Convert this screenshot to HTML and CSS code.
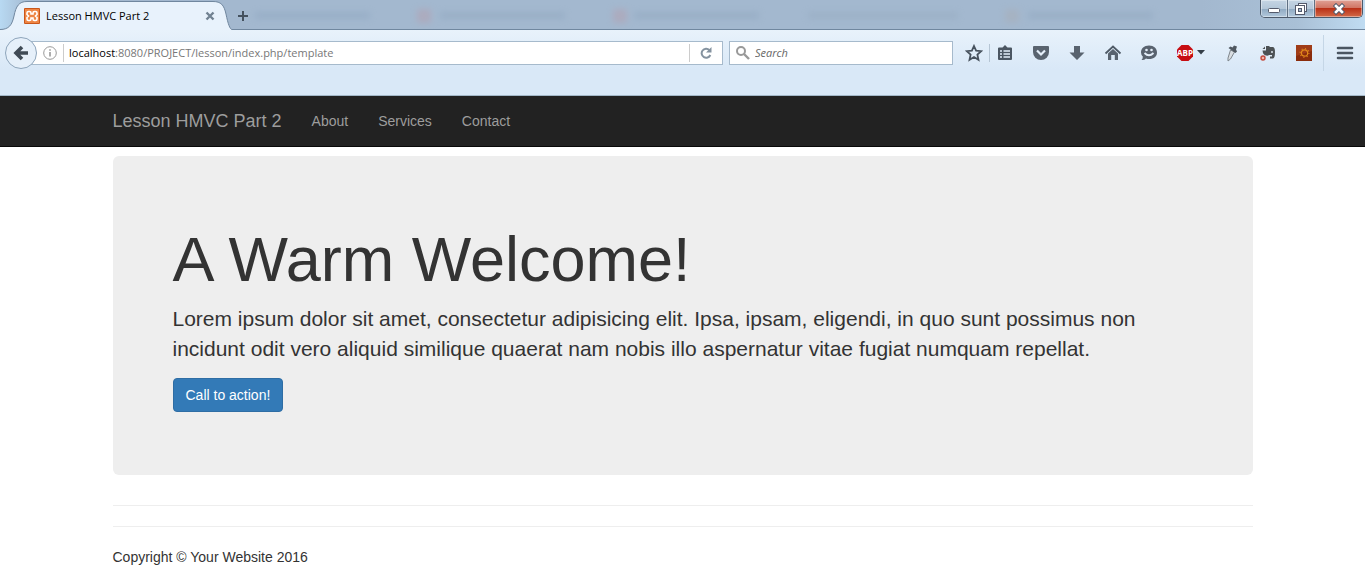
FILE: index.html
```
<!DOCTYPE html>
<html lang="en">
<head>
    <meta charset="UTF-8">
    <meta name="viewport" content="width=device-width, initial-scale=1.0">
    <title>Lesson HMVC Part 2</title>
    <link rel="stylesheet" href="styles.css">
</head>
<body>
    <!-- Browser window -->
    <header class="browser">
        <div class="tab-bar">
            <!-- Blurred background tabs behind the glass -->
            <svg class="glass" aria-hidden="true">
                <defs>
                    <filter id="soft" x="-20%" y="-100%" width="140%" height="300%"><feGaussianBlur stdDeviation="3"/></filter>
                </defs>
                <g filter="url(#soft)">
                    <rect x="255" y="12" width="115" height="7" fill="#8ea6c0"/>
                    <rect x="417" y="9" width="14" height="14" fill="#b59fae"/>
                    <rect x="440" y="12" width="125" height="7" fill="#8fa6be"/>
                    <rect x="613" y="9" width="14" height="14" fill="#b59fae"/>
                    <rect x="634" y="12" width="125" height="7" fill="#8fa6be"/>
                    <rect x="808" y="12" width="150" height="7" fill="#95aac0"/>
                    <rect x="1005" y="9" width="14" height="14" fill="#a9adb6"/>
                    <rect x="1028" y="12" width="125" height="7" fill="#8fa6be"/>
                </g>
            </svg>
            <div class="tab">
                <svg class="tab-shape" viewBox="0 0 232 30" aria-hidden="true">
                    <path d="M0 29.500C9 29.500 12 25 14 16C16 6 19 1.500 27 1.500H213C221 1.500 224 5 226 14C228 24 230 29.500 232 29.500V30H0Z" fill="#e8f2fc"/>
                    <path d="M0 29.500C9 29.500 12 25 14 16C16 6 19 1.500 27 1.500H213C221 1.500 224 5 226 14C228 24 230 29.500 232 29.500" fill="none" stroke="#70879f"/>
                </svg>
                <svg class="favicon" viewBox="0 0 16 16" aria-hidden="true">
                    <rect width="16" height="16" rx="1" fill="#c9561a"/>
                    <rect x="1" y="1" width="14" height="14" fill="#ee8544"/>
                    <path d="M5.500 3.500H4.500Q3 3.500 3 5V6.500L4.500 8L3 9.500V11Q3 12.500 4.500 12.500H5.500Q7 12.500 7 11V10H9V11Q9 12.500 10.500 12.500H11.500Q13 12.500 13 11V9.500L11.500 8L13 6.500V5Q13 3.500 11.500 3.500H10.500Q9 3.500 9 5V6H7V5Q7 3.500 5.500 3.500Z" fill="none" stroke="#fff" stroke-width="1.600"/>
                </svg>
                <span class="tab-title">Lesson HMVC Part 2</span>
                <button class="icon-btn" type="button" aria-label="Close tab">
                    <svg width="10" height="10" viewBox="0 0 10 10"><path d="M1.500 1.500L8.500 8.500M8.500 1.500L1.500 8.500" stroke="#718292" stroke-width="2.400"/></svg>
                </button>
            </div>
            <button class="icon-btn new-tab" type="button" aria-label="New tab">
                <svg width="12" height="12" viewBox="0 0 12 12"><path d="M6 1V11M1 6H11" stroke="#45525f" stroke-width="2"/></svg>
            </button>
            <div class="window-buttons">
                <button class="win-btn" type="button" aria-label="Minimize">
                    <svg width="14" height="14" viewBox="0 0 14 14"><rect x="1.500" y="6.500" width="11" height="4" rx="1" fill="#fff" stroke="#545a6b"/></svg>
                </button>
                <button class="win-btn" type="button" aria-label="Restore">
                    <svg width="14" height="14" viewBox="0 0 14 14"><rect x="4.500" y="1.500" width="8" height="8" fill="#fff" stroke="#545a6b"/><rect x="1.500" y="3.500" width="9" height="9" fill="#fff" stroke="#545a6b"/><rect x="4.500" y="6.500" width="3" height="3" fill="#a9bed2" stroke="#545a6b"/></svg>
                </button>
                <button class="win-btn win-close" type="button" aria-label="Close">
                    <svg width="14" height="14" viewBox="0 0 14 14"><path d="M4 4L10 10M10 4L4 10" stroke="#545a6b" stroke-width="4.500" stroke-linecap="square"/><path d="M4 4L10 10M10 4L4 10" stroke="#fff" stroke-width="2.600" stroke-linecap="square"/></svg>
                </button>
            </div>
        </div>

        <div class="toolbar">
            <button class="back" type="button" aria-label="Back">
                <svg width="16" height="16" viewBox="0 0 16 16"><path d="M9 2L3 8L9 14M3 8H15" fill="none" stroke="#404b56" stroke-width="3.600"/></svg>
            </button>
            <div class="url-bar">
                <svg width="14" height="14" viewBox="0 0 14 14" aria-hidden="true"><circle cx="7" cy="7" r="6.300" fill="none" stroke="#999"/><path d="M7 6V10.500M7 3.200V4.800" stroke="#999" stroke-width="1.600"/></svg>
                <div class="url"><span class="host">localhost</span>:8080/PROJECT/lesson/index.php/template</div>
                <button class="icon-btn reload" type="button" aria-label="Reload">
                    <svg width="12" height="12" viewBox="0 0 12 12"><path d="M9.300 3A4.500 4.500 0 1 0 10.300 8" fill="none" stroke="#84929f" stroke-width="2"/><path d="M11.500 0V5.500H6Z" fill="#84929f"/></svg>
                </button>
            </div>
            <label class="search-box">
                <svg width="14" height="14" viewBox="0 0 14 14" aria-hidden="true"><circle cx="5" cy="5" r="4" fill="none" stroke="#999" stroke-width="2"/><path d="M8 8L13 13" stroke="#999" stroke-width="2.400"/></svg>
                <input type="text" placeholder="Search" aria-label="Search">
            </label>
            <div class="tools">
                <button class="icon-btn star" type="button" aria-label="Bookmark this page">
                    <svg width="18" height="18" viewBox="0 0 18 18"><path d="M9 2L11.100 6.700L16.200 7.200L12.400 10.600L13.500 15.800L9 13.100L4.500 15.800L5.600 10.600L1.800 7.200L6.900 6.700Z" fill="none" stroke="#47525e" stroke-width="1.800"/></svg>
                </button>
                <button class="icon-btn" type="button" aria-label="Bookmarks">
                    <svg width="18" height="18" viewBox="0 0 18 18"><path d="M3 3.500H6.500L9 1L11.500 3.500H15Q16 3.500 16 4.500V15Q16 16 15 16H3Q2 16 2 15V4.500Q2 3.500 3 3.500Z" fill="#4b5662"/><path d="M4 7H6M7.500 7H14M4 10H6M7.500 10H14M4 13H6M7.500 13H14" stroke="#e5effa" stroke-width="1.600"/></svg>
                </button>
                <button class="icon-btn" type="button" aria-label="Pocket">
                    <svg width="18" height="18" viewBox="0 0 18 18"><path d="M2 2H16Q17 2 17 3V8A8 8 0 0 1 1 8V3Q1 2 2 2Z" fill="#59636f"/><path d="M5 6.500L9 10.500L13 6.500" fill="none" stroke="#e5effa" stroke-width="2.200"/></svg>
                </button>
                <button class="icon-btn" type="button" aria-label="Downloads">
                    <svg width="18" height="18" viewBox="0 0 18 18"><path d="M6 2H12V8.500H16.500L9 16L1.500 8.500H6Z" fill="#59636f"/></svg>
                </button>
                <button class="icon-btn" type="button" aria-label="Home">
                    <svg width="18" height="18" viewBox="0 0 18 18"><path d="M1.500 9.500L9 2.500L16.500 9.500" fill="none" stroke="#4f5a66" stroke-width="1.800"/><path d="M4 9.500L9 5L14 9.500V16H10.800V11H7.200V16H4Z" fill="#59636f"/></svg>
                </button>
                <button class="icon-btn" type="button" aria-label="Hello">
                    <svg width="18" height="18" viewBox="0 0 18 18"><path d="M9 1.500C14 1.500 17 4.500 17 8.500S14 15 9 15Q7.500 15 6 14.500Q4 16.500 1.500 16Q3 14.500 2.800 12.500Q1 10.700 1 8.500C1 4.500 4 1.500 9 1.500Z" fill="#59636f"/><circle cx="6.500" cy="6" r="1.300" fill="#e5effa"/><circle cx="11.500" cy="6" r="1.300" fill="#e5effa"/><path d="M4.500 9Q9 13.500 13.500 9" fill="none" stroke="#e5effa" stroke-width="1.800"/></svg>
                </button>
                <button class="icon-btn abp" type="button" aria-label="Adblock Plus">
                    <svg width="18" height="18" viewBox="0 0 18 18"><path d="M5.500 1H12.500L17 5.500V12.500L12.500 17H5.500L1 12.500V5.500Z" fill="#c70d12"/><text class="abp-text" x="9" y="12" text-anchor="middle">ABP</text></svg>
                    <svg width="8" height="5" viewBox="0 0 8 5"><path d="M0 0H8L4 4.500Z" fill="#333d47"/></svg>
                </button>
                <button class="icon-btn" type="button" aria-label="Color picker">
                    <svg width="18" height="18" viewBox="0 0 18 18"><path d="M7.500 6L11.500 8L7.500 15L5 17L5 14Z" fill="#d9dee2" stroke="#7f868c"/><path d="M5.500 4L7.500 2.500L9.500 3.500L11 1.500L14 2.500L13 5.500L14 7.500L12.500 9Z" fill="#505860"/></svg>
                </button>
                <button class="icon-btn" type="button" aria-label="Clipper">
                    <svg width="18" height="18" viewBox="0 0 18 18"><path d="M7 2H10L11 3H14Q16 3.500 16 8Q16 14 14 14.500H11V12.500H13V11H10Q9 12 7 11.500Q4 11 3.500 6.500H6.500Q7 6.500 7 6Z" fill="#4d5255"/><path d="M3.500 5L6 2.500V5Z" fill="#4d5255"/><circle cx="13" cy="8" r="1" fill="#dce5ed"/><circle cx="4" cy="14" r="2" fill="#f0b5ab" stroke="#c34a3c" stroke-width="1.400"/></svg>
                </button>
                <button class="icon-btn" type="button" aria-label="Debugger">
                    <svg width="18" height="18" viewBox="0 0 18 18"><rect x="1" y="1" width="16" height="16" fill="#8a2c0c"/><path d="M1 1H17V7L1 12Z" fill="#a03c17"/><circle cx="9.500" cy="9" r="3.200" fill="none" stroke="#e28a1c" stroke-width="1.200"/><circle cx="9.500" cy="9" r="4.400" fill="none" stroke="#e28a1c" stroke-width="1.200" stroke-dasharray="1 2.450"/></svg>
                </button>
            </div>
            <button class="icon-btn menu" type="button" aria-label="Open menu">
                <svg width="18" height="14" viewBox="0 0 18 14"><path d="M2 2H16M2 7H16M2 12H16" stroke="#4b5662" stroke-width="2.600" stroke-linecap="round"/></svg>
            </button>
        </div>
    </header>

    <!-- Navigation -->
    <nav class="navbar">
        <div class="container nav-inner">
            <a class="navbar-brand" href="#">Lesson HMVC Part 2</a>
            <ul class="nav">
                <li><a href="#">About</a></li>
                <li><a href="#">Services</a></li>
                <li><a href="#">Contact</a></li>
            </ul>
        </div>
    </nav>

    <!-- Page Content -->
    <main class="container">
        <section class="jumbotron">
            <h1>A Warm Welcome!</h1>
            <p>Lorem ipsum dolor sit amet, consectetur adipisicing elit. Ipsa, ipsam, eligendi, in quo sunt possimus non incidunt odit vero aliquid similique quaerat nam nobis illo aspernatur vitae fugiat numquam repellat.</p>
            <button class="btn" type="button">Call to action!</button>
        </section>

        <hr>
        <hr>

        <footer>
            <p>Copyright &copy; Your Website 2016</p>
        </footer>
    </main>
</body>
</html>
```
FILE: styles.css
```
* {
    box-sizing: border-box;
}
body {
    margin: 0;
    font-family: "Liberation Sans", Arial, sans-serif;
    font-size: 14px;
    line-height: 20px;
    color: #333;
    background: #fff;
}
button {
    font-family: inherit;
    cursor: pointer;
}
svg {
    display: block;
    flex-shrink: 0;
}

/* Browser window */
.browser {
    font-family: "Open Sans", "Noto Sans", sans-serif;
    font-size: 11px;
}
.tab-bar {
    position: relative;
    display: flex;
    align-items: center;
    height: 30px;
    border-bottom: 1px solid #70879f;
    background: linear-gradient(90deg, #b8d9f2 0, #a3b8cf 30px, #a3b8cf 88%, #a9c0d6 95%, #c0dcf2 100%);
}
.glass {
    position: absolute;
    top: 0;
    left: 0;
    width: 100%;
    height: 100%;
    opacity: 0.5;
}
.tab {
    position: relative;
    display: flex;
    align-items: center;
    width: 232px;
    height: 30px;
    padding: 1px 17px 0 24px;
    margin-bottom: -1px;
}
.tab-shape {
    position: absolute;
    top: 0;
    left: 0;
    width: 232px;
    height: 30px;
}
.favicon {
    position: relative;
    width: 16px;
    height: 16px;
    margin-right: 6px;
}
.tab-title {
    position: relative;
    flex: 1;
    color: #000;
}
.icon-btn {
    position: relative;
    display: flex;
    align-items: center;
    justify-content: center;
    padding: 0;
    border: 0;
    background: none;
}
.new-tab {
    margin: 2px 0 0 5px;
}
.window-buttons {
    position: relative;
    display: flex;
    align-self: flex-start;
    height: 18px;
    margin-left: auto;
    margin-right: 2px;
    border: 1px solid #4d5a6b;
    border-top: 0;
    border-radius: 0 0 5px 5px;
    overflow: hidden;
}
.win-btn {
    display: flex;
    align-items: center;
    justify-content: center;
    width: 27px;
    padding: 0;
    border: 0;
    border-right: 1px solid #5f7083;
    background: linear-gradient(#c5d5e4 0, #b4c7d9 50%, #8fa9c1 51%, #b2c8dc 100%);
    box-shadow: inset 0 0 0 1px rgba(255, 255, 255, 0.4);
}
.win-close {
    width: 47px;
    border-right: 0;
    background: linear-gradient(#e0a296 0, #d07361 48%, #ba3117 50%, #d26a48 100%);
}

.toolbar {
    display: flex;
    align-items: center;
    height: 66px;
    padding: 0 11px 20px 5px;
    border-bottom: 1px solid #a3b8c8;
    background: linear-gradient(#e8f2fb, #d9e8f7 60%);
}
.back {
    position: relative;
    z-index: 1;
    display: flex;
    align-items: center;
    justify-content: center;
    width: 32px;
    height: 32px;
    padding: 0;
    border: 1px solid #8ea5bb;
    border-radius: 50%;
    background: #e6f0fa;
}
.url-bar,
.search-box {
    display: flex;
    align-items: center;
    height: 24px;
    border: 1px solid #a6bacc;
    background: #fff;
}
.url-bar {
    flex: 1;
    margin-left: -8px;
    padding-left: 13px;
}
.url {
    flex: 1;
    height: 18px;
    line-height: 18px;
    margin-left: 6px;
    padding-left: 5px;
    border-left: 1px solid #ccc;
    color: #777;
    white-space: nowrap;
}
.host {
    color: #000;
}
.reload {
    width: 33px;
    height: 18px;
    border-left: 1px solid #ccc;
}
.search-box {
    width: 224px;
    margin-left: 6px;
    padding-left: 6px;
}
.search-box input {
    width: 100%;
    padding: 0 5px;
    border: 0;
    outline: 0;
    font: inherit;
    font-style: italic;
    background: none;
}
.search-box input::placeholder {
    color: #666;
    opacity: 1;
}
.tools {
    display: flex;
    align-items: center;
    gap: 18px;
    margin-left: 12px;
}
.star {
    width: 25px;
    height: 18px;
    margin-right: -12px;
    justify-content: flex-start;
    border-right: 1px solid #b5c5d4;
}
.abp {
    gap: 3px;
}
.abp-text {
    font: bold 8px "Open Sans", sans-serif;
    fill: #fff;
}
.menu {
    height: 36px;
    margin-left: 10px;
    padding-left: 12px;
    border-left: 1px solid #c5d6e6;
}

/* Page */
.container {
    max-width: 1170px;
    margin: 0 auto;
    padding: 0 15px;
}
.navbar {
    background: #222;
    border-bottom: 1px solid #080808;
}
.nav-inner {
    display: flex;
}
.navbar a {
    display: block;
    padding: 15px;
    color: #9d9d9d;
    text-decoration: none;
}
.navbar .navbar-brand {
    padding-left: 0;
    font-size: 18px;
}
.nav {
    display: flex;
    margin: 0;
    padding: 0;
    list-style: none;
}
.jumbotron {
    margin: 9px 0 30px;
    padding: 69px 60px 63px;
    border-radius: 6px;
    background: #eee;
}
.jumbotron h1 {
    margin: 0 0 10px;
    font-size: 63px;
    font-weight: 500;
    line-height: 69px;
}
.jumbotron p {
    margin: 0 0 14px;
    font-size: 21px;
    line-height: 30px;
}
.btn {
    padding: 6px 12px;
    border: 1px solid #2e6da4;
    border-radius: 4px;
    font-size: 14px;
    line-height: 20px;
    color: #fff;
    background: #337ab7;
}
hr {
    margin: 20px 0;
    border: 0;
    border-top: 1px solid #eee;
}
footer p {
    margin: 0 0 10px;
}
```
